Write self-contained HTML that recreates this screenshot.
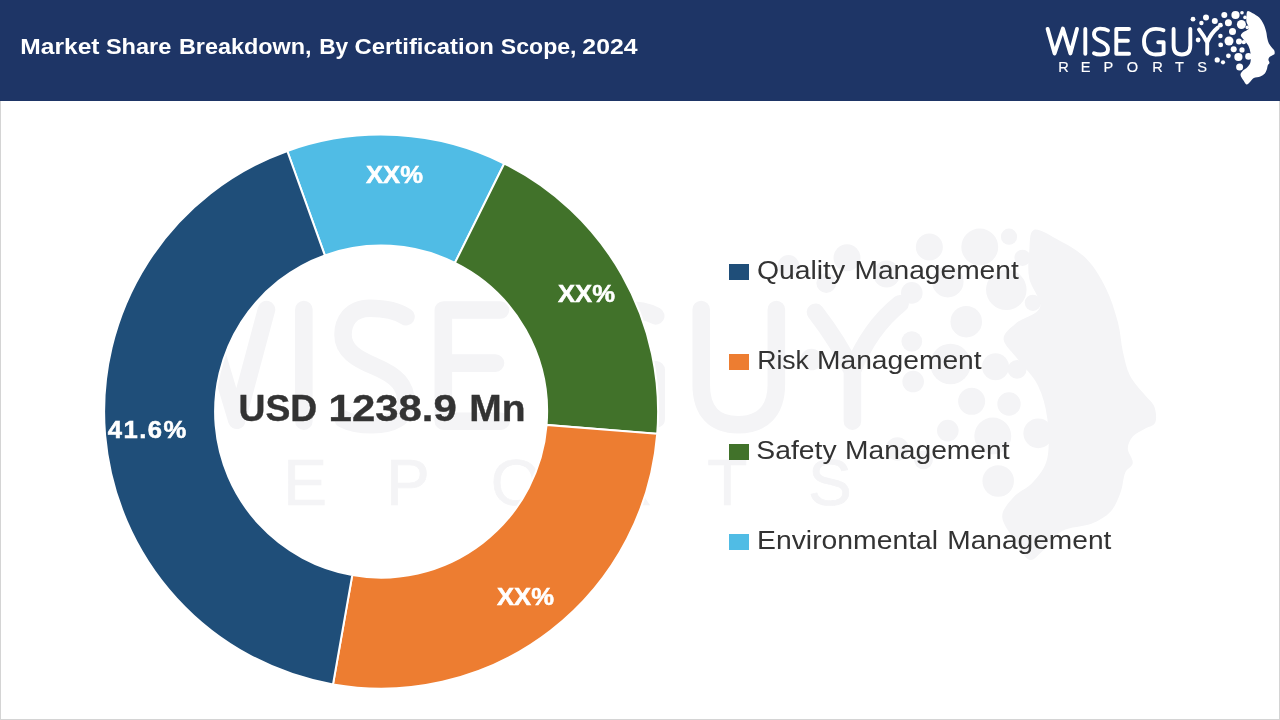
<!DOCTYPE html>
<html><head><meta charset="utf-8"><style>
html,body{margin:0;padding:0;}
body{width:1280px;height:720px;position:relative;overflow:hidden;background:#fff;font-family:"Liberation Sans",sans-serif;}
#hdr{position:absolute;left:0;top:0;width:1280px;height:101px;background:#1e3566;}
#frame{position:absolute;left:0;top:101px;width:1278px;height:618px;border:1px solid #d4d4d4;border-top:none;}
#title{position:absolute;left:21px;top:30px;color:#fff;font-weight:bold;font-size:21.5px;white-space:nowrap;transform-origin:0 0;}
svg{position:absolute;left:0;top:0;will-change:transform;}
.leg{position:absolute;left:729px;width:20px;height:16px;}
.lt{position:absolute;left:757px;color:#333;font-size:26px;white-space:nowrap;transform-origin:0 0;}
</style></head><body>
<div id="hdr"></div>
<div id="frame"></div>
<svg width="1280" height="720" viewBox="0 0 1280 720">
<g ><path d="M1047.6,28.9 L1054.6,53.5 L1062.9,28.5 L1070.4,53.5 L1077,28.9 M1085.3,28.9 L1085.3,53.7 M1108,30.5 C1105.5,28.8 1102,28.6 1100,28.6 C1095.5,28.6 1094,31.8 1094,34.5 C1094,38 1097,39.8 1101,41.5 C1106,43.6 1108,45.8 1108,49.5 C1108,53 1105,54.5 1100.5,54.5 C1097.5,54.5 1095.5,54 1094,53.2 M1129,29 L1116.3,29 L1116.3,53.7 L1129.1,53.7 M1116.3,40.8 L1127.9,40.8 M1163.5,30.3 C1161.5,29.2 1159,28.9 1156,28.9 C1148,28.9 1144,34.5 1144,41.7 C1144,49.5 1148.5,54.5 1155.5,54.5 C1159,54.5 1162,54 1163.6,53.2 L1163.6,42.3 L1158.2,42.3 M1173.6,28.9 L1173.6,45.5 C1173.6,51.5 1176.5,54.5 1181.8,54.5 C1187.2,54.5 1190.3,51.5 1190.3,45.5 L1190.3,28.9 M1199,29.5 Q1204,36 1207.2,42.5 L1207.2,53.7 M1207.2,42.5 Q1211,33 1217.8,27.6" fill="none" stroke="#ffffff" stroke-width="3.9" stroke-linejoin="round" stroke-linecap="round"/><g fill="#ffffff" stroke="#ffffff" stroke-width="0.15" font-family="Liberation Sans, sans-serif" font-size="14.6" text-anchor="middle"><text x="1063.45" y="72.3">R</text><text x="1085.6" y="72.3">E</text><text x="1108.45" y="72.3">P</text><text x="1132.5" y="72.3">O</text><text x="1157.5" y="72.3">R</text><text x="1179.4" y="72.3">T</text><text x="1202.2" y="72.3">S</text></g><g fill="#ffffff"><circle cx="1235.5" cy="15" r="4.1"/><circle cx="1241.4" cy="24.5" r="4.5"/><circle cx="1228.4" cy="22.7" r="3.5"/><circle cx="1224.3" cy="15" r="3"/><circle cx="1242" cy="12.7" r="1.8"/><circle cx="1245" cy="17.4" r="1.8"/><circle cx="1247.3" cy="27.4" r="1.8"/><circle cx="1214.8" cy="21" r="3"/><circle cx="1206" cy="17.4" r="3"/><circle cx="1193" cy="19.2" r="2.4"/><circle cx="1201.4" cy="23" r="2.2"/><circle cx="1220.4" cy="25.2" r="2.4"/><circle cx="1232.5" cy="31.6" r="3.5"/><circle cx="1220.4" cy="36" r="2.3"/><circle cx="1229" cy="41" r="4.5"/><circle cx="1239" cy="41.6" r="3"/><circle cx="1243.8" cy="42.2" r="2.1"/><circle cx="1198.1" cy="40" r="2.4"/><circle cx="1220.7" cy="44.9" r="2.4"/><circle cx="1233.7" cy="49.3" r="3"/><circle cx="1242" cy="49.9" r="2.6"/><circle cx="1238.4" cy="57" r="4.1"/><circle cx="1248.5" cy="56.4" r="3.3"/><circle cx="1228.4" cy="55.8" r="2.4"/><circle cx="1217.2" cy="59.9" r="2.6"/><circle cx="1223" cy="62.3" r="2.1"/><circle cx="1239.6" cy="67" r="3.5"/><path d="M1247.50,11.20 C1248.53,10.75 1250.75,12.23 1252.70,13.30 C1254.65,14.37 1257.40,15.80 1259.20,17.60 C1261.00,19.40 1262.33,21.75 1263.50,24.10 C1264.67,26.45 1265.57,29.35 1266.20,31.70 C1266.83,34.05 1266.85,36.22 1267.30,38.20 C1267.75,40.18 1268.08,41.98 1268.90,43.60 C1269.72,45.22 1271.30,46.75 1272.20,47.90 C1273.10,49.05 1273.92,49.48 1274.30,50.50 C1274.68,51.52 1274.85,53.18 1274.50,54.00 C1274.15,54.82 1273.03,54.88 1272.20,55.40 C1271.37,55.92 1270.13,56.37 1269.50,57.10 C1268.87,57.83 1268.40,58.82 1268.40,59.80 C1268.40,60.78 1269.60,62.10 1269.50,63.00 C1269.40,63.90 1268.25,64.12 1267.80,65.20 C1267.35,66.28 1267.33,68.07 1266.80,69.50 C1266.27,70.93 1265.68,72.63 1264.60,73.80 C1263.52,74.97 1262.10,75.78 1260.30,76.50 C1258.50,77.22 1255.60,77.10 1253.80,78.10 C1252.00,79.10 1250.72,81.43 1249.50,82.50 C1248.28,83.57 1247.50,84.83 1246.50,84.50 C1245.50,84.17 1244.50,82.08 1243.50,80.50 C1242.50,78.92 1240.58,76.65 1240.50,75.00 C1240.42,73.35 1241.87,71.88 1243.00,70.60 C1244.13,69.32 1246.05,68.73 1247.30,67.30 C1248.55,65.87 1249.97,64.38 1250.50,62.00 C1251.03,59.62 1250.85,55.72 1250.50,53.00 C1250.15,50.28 1249.48,47.87 1248.40,45.70 C1247.32,43.53 1245.27,41.70 1244.00,40.00 C1242.73,38.30 1240.88,36.83 1240.80,35.50 C1240.72,34.17 1242.15,33.18 1243.50,32.00 C1244.85,30.82 1248.40,30.07 1248.90,28.40 C1249.40,26.73 1246.90,24.07 1246.50,22.00 C1246.10,19.93 1246.33,17.80 1246.50,16.00 C1246.67,14.20 1246.47,11.65 1247.50,11.20 Z"/></g></g>
<g><g transform="translate(-4580.00,179.50) scale(4.5)"><path d="M1047.6,28.9 L1054.6,53.5 L1062.9,28.5 L1070.4,53.5 L1077,28.9 M1085.3,28.9 L1085.3,53.7 M1108,30.5 C1105.5,28.8 1102,28.6 1100,28.6 C1095.5,28.6 1094,31.8 1094,34.5 C1094,38 1097,39.8 1101,41.5 C1106,43.6 1108,45.8 1108,49.5 C1108,53 1105,54.5 1100.5,54.5 C1097.5,54.5 1095.5,54 1094,53.2 M1129,29 L1116.3,29 L1116.3,53.7 L1129.1,53.7 M1116.3,40.8 L1127.9,40.8 M1163.5,30.3 C1161.5,29.2 1159,28.9 1156,28.9 C1148,28.9 1144,34.5 1144,41.7 C1144,49.5 1148.5,54.5 1155.5,54.5 C1159,54.5 1162,54 1163.6,53.2 L1163.6,42.3 L1158.2,42.3 M1173.6,28.9 L1173.6,45.5 C1173.6,51.5 1176.5,54.5 1181.8,54.5 C1187.2,54.5 1190.3,51.5 1190.3,45.5 L1190.3,28.9 M1199,29.5 Q1204,36 1207.2,42.5 L1207.2,53.7 M1207.2,42.5 Q1211,33 1217.8,27.6" fill="none" stroke="#f4f4f6" stroke-width="3.9" stroke-linejoin="round" stroke-linecap="round"/><g fill="#f4f4f6" stroke="#f4f4f6" stroke-width="0.15" font-family="Liberation Sans, sans-serif" font-size="14.6" text-anchor="middle"><text x="1063.45" y="72.3">R</text><text x="1085.6" y="72.3">E</text><text x="1108.45" y="72.3">P</text><text x="1132.5" y="72.3">O</text><text x="1157.5" y="72.3">R</text><text x="1179.4" y="72.3">T</text><text x="1202.2" y="72.3">S</text></g><g fill="#f4f4f6"><circle cx="1235.5" cy="15" r="4.1"/><circle cx="1241.4" cy="24.5" r="4.5"/><circle cx="1228.4" cy="22.7" r="3.5"/><circle cx="1224.3" cy="15" r="3"/><circle cx="1242" cy="12.7" r="1.8"/><circle cx="1245" cy="17.4" r="1.8"/><circle cx="1247.3" cy="27.4" r="1.8"/><circle cx="1214.8" cy="21" r="3"/><circle cx="1206" cy="17.4" r="3"/><circle cx="1193" cy="19.2" r="2.4"/><circle cx="1201.4" cy="23" r="2.2"/><circle cx="1220.4" cy="25.2" r="2.4"/><circle cx="1232.5" cy="31.6" r="3.5"/><circle cx="1220.4" cy="36" r="2.3"/><circle cx="1229" cy="41" r="4.5"/><circle cx="1239" cy="41.6" r="3"/><circle cx="1243.8" cy="42.2" r="2.1"/><circle cx="1198.1" cy="40" r="2.4"/><circle cx="1220.7" cy="44.9" r="2.4"/><circle cx="1233.7" cy="49.3" r="3"/><circle cx="1242" cy="49.9" r="2.6"/><circle cx="1238.4" cy="57" r="4.1"/><circle cx="1248.5" cy="56.4" r="3.3"/><circle cx="1228.4" cy="55.8" r="2.4"/><circle cx="1217.2" cy="59.9" r="2.6"/><circle cx="1223" cy="62.3" r="2.1"/><circle cx="1239.6" cy="67" r="3.5"/><path d="M1247.50,11.20 C1248.53,10.75 1250.75,12.23 1252.70,13.30 C1254.65,14.37 1257.40,15.80 1259.20,17.60 C1261.00,19.40 1262.33,21.75 1263.50,24.10 C1264.67,26.45 1265.57,29.35 1266.20,31.70 C1266.83,34.05 1266.85,36.22 1267.30,38.20 C1267.75,40.18 1268.08,41.98 1268.90,43.60 C1269.72,45.22 1271.30,46.75 1272.20,47.90 C1273.10,49.05 1273.92,49.48 1274.30,50.50 C1274.68,51.52 1274.85,53.18 1274.50,54.00 C1274.15,54.82 1273.03,54.88 1272.20,55.40 C1271.37,55.92 1270.13,56.37 1269.50,57.10 C1268.87,57.83 1268.40,58.82 1268.40,59.80 C1268.40,60.78 1269.60,62.10 1269.50,63.00 C1269.40,63.90 1268.25,64.12 1267.80,65.20 C1267.35,66.28 1267.33,68.07 1266.80,69.50 C1266.27,70.93 1265.68,72.63 1264.60,73.80 C1263.52,74.97 1262.10,75.78 1260.30,76.50 C1258.50,77.22 1255.60,77.10 1253.80,78.10 C1252.00,79.10 1250.72,81.43 1249.50,82.50 C1248.28,83.57 1247.50,84.83 1246.50,84.50 C1245.50,84.17 1244.50,82.08 1243.50,80.50 C1242.50,78.92 1240.58,76.65 1240.50,75.00 C1240.42,73.35 1241.87,71.88 1243.00,70.60 C1244.13,69.32 1246.05,68.73 1247.30,67.30 C1248.55,65.87 1249.97,64.38 1250.50,62.00 C1251.03,59.62 1250.85,55.72 1250.50,53.00 C1250.15,50.28 1249.48,47.87 1248.40,45.70 C1247.32,43.53 1245.27,41.70 1244.00,40.00 C1242.73,38.30 1240.88,36.83 1240.80,35.50 C1240.72,34.17 1242.15,33.18 1243.50,32.00 C1244.85,30.82 1248.40,30.07 1248.90,28.40 C1249.40,26.73 1246.90,24.07 1246.50,22.00 C1246.10,19.93 1246.33,17.80 1246.50,16.00 C1246.67,14.20 1246.47,11.65 1247.50,11.20 Z"/></g></g></g>
<path d="M287.27,150.98 A277.0,277.0 0 0 1 504.26,163.49 L454.91,262.91 A166.0,166.0 0 0 0 324.87,255.41 Z" fill="#50bce5" stroke="#fff" stroke-width="2" stroke-linejoin="miter"/>
<path d="M504.26,163.49 A277.0,277.0 0 0 1 657.21,433.82 L546.57,424.91 A166.0,166.0 0 0 0 454.91,262.91 Z" fill="#41722a" stroke="#fff" stroke-width="2" stroke-linejoin="miter"/>
<path d="M657.21,433.82 A277.0,277.0 0 0 1 333.00,684.39 L352.27,575.08 A166.0,166.0 0 0 0 546.57,424.91 Z" fill="#ed7d31" stroke="#fff" stroke-width="2" stroke-linejoin="miter"/>
<path d="M333.00,684.39 A277.0,277.0 0 0 1 287.27,150.98 L324.87,255.41 A166.0,166.0 0 0 0 352.27,575.08 Z" fill="#1f4e79" stroke="#fff" stroke-width="2" stroke-linejoin="miter"/>
<g fill="#fff" stroke="#fff" stroke-width="0.5" font-weight="bold" font-family="Liberation Sans, sans-serif" font-size="23" text-anchor="middle">
<text transform="translate(394.5,182.9) scale(1.114,1)">XX%</text>
<text transform="translate(586.5,301.9) scale(1.114,1)">XX%</text>
<text transform="translate(525.5,604.9) scale(1.114,1)">XX%</text>
<text transform="translate(107.8,438.1) scale(1.114,1)" text-anchor="start" letter-spacing="1.3">41.6%</text>
</g>
<g fill="#333" stroke="#333" stroke-width="0.4" font-weight="bold" font-family="Liberation Sans, sans-serif" font-size="37.8"><text transform="translate(238.53,421.3) scale(0.9868,1)">USD</text><text transform="translate(328.58,421.3) scale(1.1089,1)">1238.9</text><text transform="translate(469.34,421.3) scale(1.0320,1)">Mn</text></g>
<g fill="#fff" font-weight="bold" font-family="Liberation Sans, sans-serif" font-size="21.5"><text transform="translate(20.36,54.2) scale(1.1426,1)">Market</text><text transform="translate(105.90,54.2) scale(1.0966,1)">Share</text><text transform="translate(178.91,54.2) scale(1.0900,1)">Breakdown,</text><text transform="translate(319.14,54.2) scale(1.0577,1)">By</text><text transform="translate(354.39,54.2) scale(1.1130,1)">Certification</text><text transform="translate(500.83,54.2) scale(1.0735,1)">Scope,</text><text transform="translate(582.35,54.2) scale(1.1532,1)">2024</text></g>
<g fill="#333" font-family="Liberation Sans, sans-serif" font-size="26">
<text transform="translate(756.91,278.8) scale(1.0912,1)">Quality</text><text transform="translate(854.43,278.8) scale(1.0832,1)">Management</text><text transform="translate(757.15,368.8) scale(1.0250,1)">Risk</text><text transform="translate(816.93,368.8) scale(1.0859,1)">Management</text><text transform="translate(756.32,458.8) scale(1.0901,1)">Safety</text><text transform="translate(845.03,458.8) scale(1.0842,1)">Management</text><text transform="translate(757.02,548.8) scale(1.0902,1)">Environmental</text><text transform="translate(947.24,548.8) scale(1.0819,1)">Management</text>
</g>
</svg>
<div class="leg" style="top:264px;background:#1f4e79"></div>
<div class="leg" style="top:354px;background:#ed7d31"></div>
<div class="leg" style="top:444px;background:#41722a"></div>
<div class="leg" style="top:534px;background:#50bce5"></div>
</body></html>
